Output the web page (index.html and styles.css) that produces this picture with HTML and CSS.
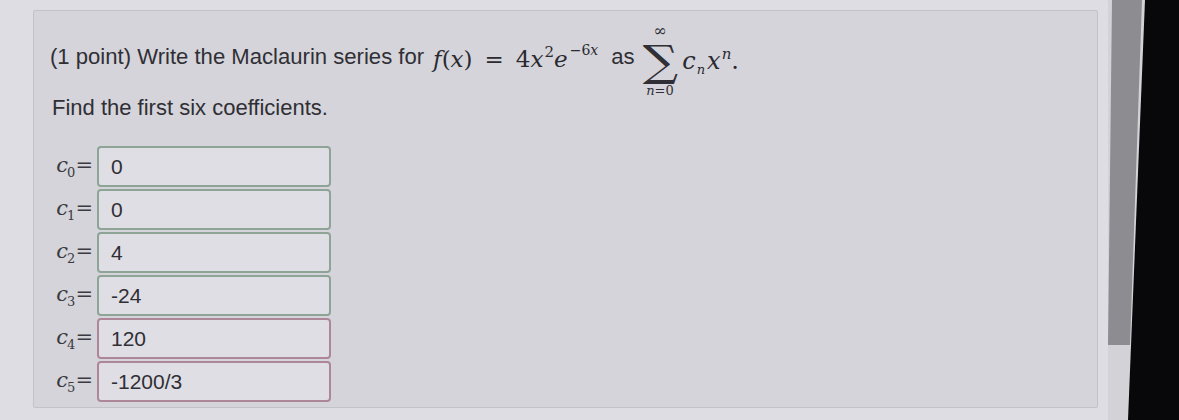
FILE: index.html
```html
<!DOCTYPE html>
<html>
<head>
<meta charset="utf-8">
<link rel="stylesheet" href="styles.css">
</head>
<body>
<div class="screen">
  <div class="main">
    <div class="panel">
      <div class="q1">
        <span class="txt">(1 point) Write the Maclaurin series for</span>
        <span class="math fx"><i>f</i>(<i>x</i>)<span class="op">=</span>4<i>x</i><sup>2</sup><i>e</i><sup class="exp">−6<i>x</i></sup></span>
        <span class="txt">as</span>
        <span class="sum">
          <span class="lim">∞</span>
          <span class="sig">∑</span>
          <span class="lim low"><i>n</i>=0</span>
        </span>
        <span class="math term"><i>c</i><sub><i>n</i></sub><i class="xx">x</i><sup><i>n</i></sup>.</span>
      </div>
      <div class="q2">Find the first six coefficients.</div>
      <div class="rows">
        <div class="row ok"><span class="lbl"><i>c</i><sub>0</sub>=</span><div class="box">0</div></div>
        <div class="row ok"><span class="lbl"><i>c</i><sub>1</sub>=</span><div class="box">0</div></div>
        <div class="row ok"><span class="lbl"><i>c</i><sub>2</sub>=</span><div class="box">4</div></div>
        <div class="row ok"><span class="lbl"><i>c</i><sub>3</sub>=</span><div class="box">-24</div></div>
        <div class="row bad"><span class="lbl"><i>c</i><sub>4</sub>=</span><div class="box">120</div></div>
        <div class="row bad"><span class="lbl"><i>c</i><sub>5</sub>=</span><div class="box">-1200/3</div></div>
      </div>
    </div>
  </div>
  <div class="track"><div class="thumb"></div></div>
  <div class="bezel"></div>
</div>
</body>
</html>
```

FILE: styles.css
```css
html, body {
  margin: 0;
  padding: 0;
}
body {
  width: 1179px;
  height: 420px;
  overflow: hidden;
  background: #dedde3;
  font-family: "Liberation Sans", Arial, sans-serif;
  color: #2f2f35;
}
.screen {
  display: flex;
  height: 420px;
}
.main {
  width: 1108px;
  padding: 10px 0 0 33px;
  box-sizing: border-box;
  flex: none;
}
.panel {
  width: 1065px;
  height: 398px;
  background: #d5d4da;
  border: 1px solid #c3c2c8;
  border-radius: 2px;
  padding: 14px 0 0 16px;
  box-sizing: border-box;
}
.q1 {
  display: flex;
  align-items: center;
  height: 72px;
  font-size: 22.1px;
  white-space: nowrap;
}
.txt {
  margin-top: -8px;
}
.math {
  font-family: "DejaVu Serif", serif;
  font-size: 23px;
  color: #2a2a30;
}
.op {
  margin: 0 12px;
}
.fx {
  margin: -8px 13px 0 9px;
}
.math sup {
  font-size: 15px;
  vertical-align: 10px;
  margin-left: 1px;
}
.math sup.exp {
  vertical-align: 12px;
  font-size: 14px;
  margin-left: 2px;
}
.sum {
  display: flex;
  flex-direction: column;
  align-items: center;
  height: 72px;
  margin: 0 7px 0 10px;
  font-family: "DejaVu Serif", serif;
}
.lim {
  font-size: 16px;
  line-height: 12px;
  height: 13px;
}
.lim.low {
  font-size: 13px;
  line-height: 13px;
  height: 13px;
  margin-top: 1px;
}
.sig {
  font-family: "DejaVu Serif", serif;
  font-size: 43px;
  line-height: 44px;
  height: 44px;
  margin-top: 1px;
  transform: scaleX(1.15);
}
.term {
  font-size: 24px;
}
.term sub {
  font-size: 13px;
  vertical-align: -5px;
  margin-left: 1px;
  margin-right: 2px;
}
.q2 {
  font-size: 22px;
  line-height: 22px;
  margin-left: 2px;
}
.rows {
  display: flex;
  flex-direction: column;
  gap: 2px;
  margin-top: 27px;
}
.row {
  display: flex;
  align-items: center;
  gap: 4px;
}
.lbl {
  width: 43px;
  text-align: right;
  font-family: "DejaVu Serif", serif;
  font-size: 21px;
  color: #3a3a40;
  white-space: nowrap;
}
.lbl sub {
  font-size: 13px;
  font-style: normal;
  vertical-align: -5px;
  margin-left: -1px;
}
.box {
  width: 234px;
  height: 41px;
  box-sizing: border-box;
  background: #dfdee4;
  border: 2px solid #8ea497;
  border-radius: 4px;
  padding: 0 12px;
  display: flex;
  align-items: center;
  font-size: 21px;
  color: #2f2f35;
}
.row.bad .box {
  border-color: #ad8798;
}
.track {
  width: 37px;
  flex: none;
  background: #d3d2d7;
}
.thumb {
  height: 345px;
  background: #8d8d91;
  clip-path: polygon(4px 0, 34px 0, 22px 100%, 0 100%);
}
.bezel {
  flex: 1;
  background: #08080a;
  margin-left: -17px;
  clip-path: polygon(17px 0, 100% 0, 100% 100%, 0 100%);
}
```
